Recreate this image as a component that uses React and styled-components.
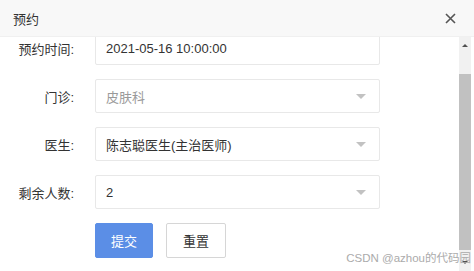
import styled, { createGlobalStyle } from "styled-components";

const GlobalStyle = createGlobalStyle`
    html, body {
        margin: 0;
        padding: 0;
        background: #ffffff;
    }
    body {
        font-family: "Liberation Sans", Arial, "Noto Sans CJK SC", sans-serif;
        color: #333333;
    }
`

const rows = [
    { label: "预约时间:", value: "2021-05-16 10:00:00", select: false },
    { label: "门诊:", value: "皮肤科", select: true, muted: true },
    { label: "医生:", value: "陈志聪医生(主治医师)", select: true },
    { label: "剩余人数:", value: "2", select: true },
]

function App() {
    return (
        <>
            <GlobalStyle />
            <StDivDialog>
                <StDivHeader>
                    <StSpanTitle>预约</StSpanTitle>
                    <StButtonClose aria-label="close">
                        <svg width="11" height="11" viewBox="0 0 11 11">
                            <path d="M1 1 L10 10 M10 1 L1 10" stroke="#555" strokeWidth="1.6" fill="none" />
                        </svg>
                    </StButtonClose>
                </StDivHeader>
                <StDivBody>
                    <StDivForm>
                        {
                            rows.map((row) => {
                                return (
                                    <StDivRow key={row.label}>
                                        <StLabel>{row.label}</StLabel>
                                        <StDivInput $muted={row.muted}>
                                            <span>{row.value}</span>
                                            {row.select && <StICaret />}
                                        </StDivInput>
                                    </StDivRow>
                                )
                            })
                        }
                        <StDivActions>
                            <StButton $primary>提交</StButton>
                            <StButton>重置</StButton>
                        </StDivActions>
                    </StDivForm>
                    <StDivScrollbar>
                        <StIArrow />
                        <StDivThumb />
                        <StIArrow $down />
                    </StDivScrollbar>
                </StDivBody>
                <StPWatermark>CSDN @azhou的代码园</StPWatermark>
            </StDivDialog>
        </>
    )
}

export default App;

const StDivDialog = styled.div`
    position: relative;
    width: 474px;
    height: 271px;
    overflow: hidden;
    background: #ffffff;
    display: flex;
    flex-direction: column;
`
const StDivHeader = styled.div`
    position: relative;
    z-index: 1;
    height: 37px;
    flex-shrink: 0;
    background: #f8f8f8;
    border-bottom: 1px solid #f0f0f0;
    box-sizing: border-box;
    display: flex;
    align-items: center;
    justify-content: space-between;
    padding: 0 13px 0 13px;
`
const StSpanTitle = styled.span`
    font-size: 13px;
    color: #333333;
`
const StButtonClose = styled.button`
    border: none;
    background: none;
    padding: 0;
    margin-right: 5px;
    display: flex;
    align-items: center;
`
const StDivBody = styled.div`
    flex: 1;
    display: flex;
    min-height: 0;
`
const StDivForm = styled.div`
    flex: 1;
    margin-top: -6px;
    display: flex;
    flex-direction: column;
    gap: 14px;
`
const StDivRow = styled.div`
    display: flex;
    align-items: center;
`
const StLabel = styled.label`
    width: 74px;
    padding-right: 21px;
    text-align: right;
    font-size: 13px;
    color: #333333;
`
const StDivInput = styled.div`
    width: 285px;
    height: 34px;
    box-sizing: border-box;
    border: 1px solid #e8e8e8;
    border-radius: 2px;
    display: flex;
    align-items: center;
    justify-content: space-between;
    padding: 0 10px 0 10px;
    font-size: 13px;
    color: ${(props) => (props.$muted ? "#9a9a9a" : "#333333")};
`
const StICaret = styled.i`
    width: 0;
    height: 0;
    margin-right: 3px;
    border-left: 5px solid transparent;
    border-right: 5px solid transparent;
    border-top: 5px solid #c2c2c2;
`
const StDivActions = styled.div`
    display: flex;
    gap: 13px;
    padding-left: 95px;
`
const StButton = styled.button`
    width: ${(props) => (props.$primary ? "58px" : "60px")};
    height: 35px;
    box-sizing: border-box;
    border-radius: 2px;
    font-family: inherit;
    font-size: 13px;
    border: 1px solid ${(props) => (props.$primary ? "#5b8ee6" : "#d6d6d6")};
    background: ${(props) => (props.$primary ? "#5b8ee6" : "#ffffff")};
    color: ${(props) => (props.$primary ? "#ffffff" : "#333333")};
    padding: 0;
`
const StDivScrollbar = styled.div`
    width: 12px;
    margin-right: 3px;
    background: #f1f1f1;
    display: flex;
    flex-direction: column;
    align-items: center;
`
const StIArrow = styled.i`
    margin: 7px 0;
    width: 0;
    height: 0;
    border-left: 3px solid transparent;
    border-right: 3px solid transparent;
    ${(props) => (props.$down ? "border-top: 3px solid #505050;" : "border-bottom: 3px solid #505050;")}
`
const StDivThumb = styled.div`
    flex: 1;
    align-self: stretch;
    margin-top: 20px;
    margin-bottom: 4px;
    background: #c1c1c1;
`
const StPWatermark = styled.p`
    position: absolute;
    right: 3px;
    bottom: 6px;
    margin: 0;
    font-size: 11.5px;
    color: #ababab;
`
